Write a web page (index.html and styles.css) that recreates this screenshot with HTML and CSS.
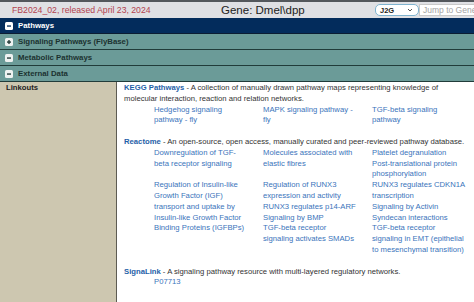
FILE: index.html
```html
<!DOCTYPE html>
<html lang="en">
<head>
  <meta charset="UTF-8" />
  <meta name="viewport" content="width=device-width, initial-scale=1.0"/>
  <title>Gene: Dmel\dpp</title>
  <link rel="stylesheet" href="styles.css">
</head>
<body>

<div class="topbar">
  <span class="release">FB2024_02, released April 23, 2024</span>
  <span class="gene">Gene: Dmel\dpp</span>
  <div class="jump">
    <span class="j2g">J2G
      <svg width="6" height="4" viewBox="0 0 6 4"><path d="M1 1 L3 3 L5 1" fill="none" stroke="#555" stroke-width="1"/></svg>
    </span>
    <span class="jumpbox">Jump to Gene</span>
  </div>
</div>

<div class="bar bar-main">
  <svg class="toggle" width="8" height="8" viewBox="0 0 8 8"><rect width="8" height="8" rx="1.5" fill="#fff"/><rect x="2" y="3.4" width="4" height="1.3" fill="#032c5c"/></svg>
  Pathways
</div>
<div class="bar">
  <svg class="toggle" width="8" height="8" viewBox="0 0 8 8"><rect width="8" height="8" rx="1.5" fill="#eef2f1"/><rect x="2" y="3.4" width="4" height="1.3" fill="#1b3230"/><rect x="3.35" y="2" width="1.3" height="4" fill="#1b3230"/></svg>
  Signaling Pathways (FlyBase)
</div>
<div class="bar">
  <svg class="toggle" width="8" height="8" viewBox="0 0 8 8"><rect width="8" height="8" rx="1.5" fill="#eef2f1"/><rect x="2" y="3.4" width="4" height="1.3" fill="#1b3230"/></svg>
  Metabolic Pathways
</div>
<div class="bar">
  <svg class="toggle" width="8" height="8" viewBox="0 0 8 8"><rect width="8" height="8" rx="1.5" fill="#eef2f1"/><rect x="2" y="3.4" width="4" height="1.3" fill="#1b3230"/></svg>
  External Data
</div>

<div class="linkouts">
  <div class="linkouts-label">Linkouts</div>
  <div class="linkouts-body">

    <div class="source">
      <p class="desc"><a class="src-name">KEGG Pathways</a> - A collection of manually drawn pathway maps representing knowledge of<br>molecular interaction, reaction and relation networks.</p>
      <div class="links">
        <div class="col"><a>Hedgehog signaling<br>pathway - fly</a></div>
        <div class="col"><a>MAPK signaling pathway -<br>fly</a></div>
        <div class="col"><a>TGF-beta signaling<br>pathway</a></div>
      </div>
    </div>

    <div class="source">
      <p class="desc"><a class="src-name">Reactome</a> - An open-source, open access, manually curated and peer-reviewed pathway database.</p>
      <div class="links">
        <div class="col">
          <a>Downregulation of TGF-<br>beta receptor signaling</a>
          <a class="gap">Regulation of Insulin-like<br>Growth Factor (IGF)<br>transport and uptake by<br>Insulin-like Growth Factor<br>Binding Proteins (IGFBPs)</a>
        </div>
        <div class="col">
          <a>Molecules associated with<br>elastic fibres</a>
          <a class="gap">Regulation of RUNX3<br>expression and activity</a>
          <a>RUNX3 regulates p14-ARF</a>
          <a>Signaling by BMP</a>
          <a>TGF-beta receptor<br>signaling activates SMADs</a>
        </div>
        <div class="col">
          <a>Platelet degranulation</a>
          <a>Post-translational protein<br>phosphorylation</a>
          <a>RUNX3 regulates CDKN1A<br>transcription</a>
          <a>Signaling by Activin</a>
          <a>Syndecan interactions</a>
          <a>TGF-beta receptor<br>signaling in EMT (epithelial<br>to mesenchymal transition)</a>
        </div>
      </div>
    </div>

    <div class="source">
      <p class="desc"><a class="src-name">SignaLink</a> - A signaling pathway resource with multi-layered regulatory networks.</p>
      <div class="links">
        <div class="col"><a>P07713</a></div>
      </div>
    </div>

  </div>
</div>

</body>
</html>
```

FILE: styles.css
```css
html {
  overflow: hidden;
}

body {
  margin: 0;
  font-family: "Liberation Sans", Arial, sans-serif;
  font-size: 7.7px;
  color: #333;
  background: #fff;
}

.topbar {
  display: flex;
  align-items: center;
  height: 16px;
  background: #dfe0e4;
  border-top: 2px solid #53575c;
  white-space: nowrap;
}

.topbar > * {
  flex: none;
}

.release {
  box-sizing: border-box;
  width: 221px;
  padding-left: 12px;
  font-size: 8.7px;
  color: #b3434f;
}

.gene {
  width: 154px;
  font-size: 11.5px;
  color: #222;
}

.jump {
  display: flex;
  height: 12px;
}

.j2g {
  box-sizing: border-box;
  width: 44px;
  display: flex;
  align-items: center;
  justify-content: space-between;
  padding: 0 5px 0 4px;
  background: #fff;
  border: 1px solid #7fb3cf;
  border-radius: 5px;
  font-weight: bold;
  font-size: 7.5px;
  color: #222;
}

.jumpbox {
  box-sizing: border-box;
  width: 70px;
  display: flex;
  align-items: center;
  padding-left: 3px;
  background: #fff;
  border: 1px solid #c9c9c9;
  font-size: 8.5px;
  color: #a4a4a4;
}

.bar {
  display: flex;
  align-items: center;
  gap: 5px;
  height: 15px;
  padding-left: 5px;
  background: #6b9b98;
  border-bottom: 1px solid #213c3a;
  color: #1b3230;
  font-weight: bold;
  font-size: 7.8px;
}

.bar-main {
  background: #032c5c;
  border-bottom-color: #0b1d33;
  color: #fff;
}

.toggle {
  flex: none;
}

.linkouts {
  display: flex;
  min-height: 230px;
  line-height: 10.8px;
}

.linkouts-label {
  box-sizing: border-box;
  width: 117px;
  flex: none;
  padding: 1px 0 0 6px;
  background: #cdc7b0;
  border-right: 1px solid #5d5b52;
  font-weight: bold;
  color: #222;
}

.linkouts-body {
  padding: 1px 0 0 7px;
  white-space: nowrap;
}

.source + .source {
  margin-top: 10.8px;
}

.desc {
  margin: 0;
}

.src-name {
  font-weight: bold;
  color: #1f5fa8;
}

.links {
  display: grid;
  grid-template-columns: repeat(3, 109px);
  margin-left: 30px;
}

.col a {
  display: block;
  color: #3a74bb;
}

.col a.gap {
  margin-top: 10.8px;
}
```
